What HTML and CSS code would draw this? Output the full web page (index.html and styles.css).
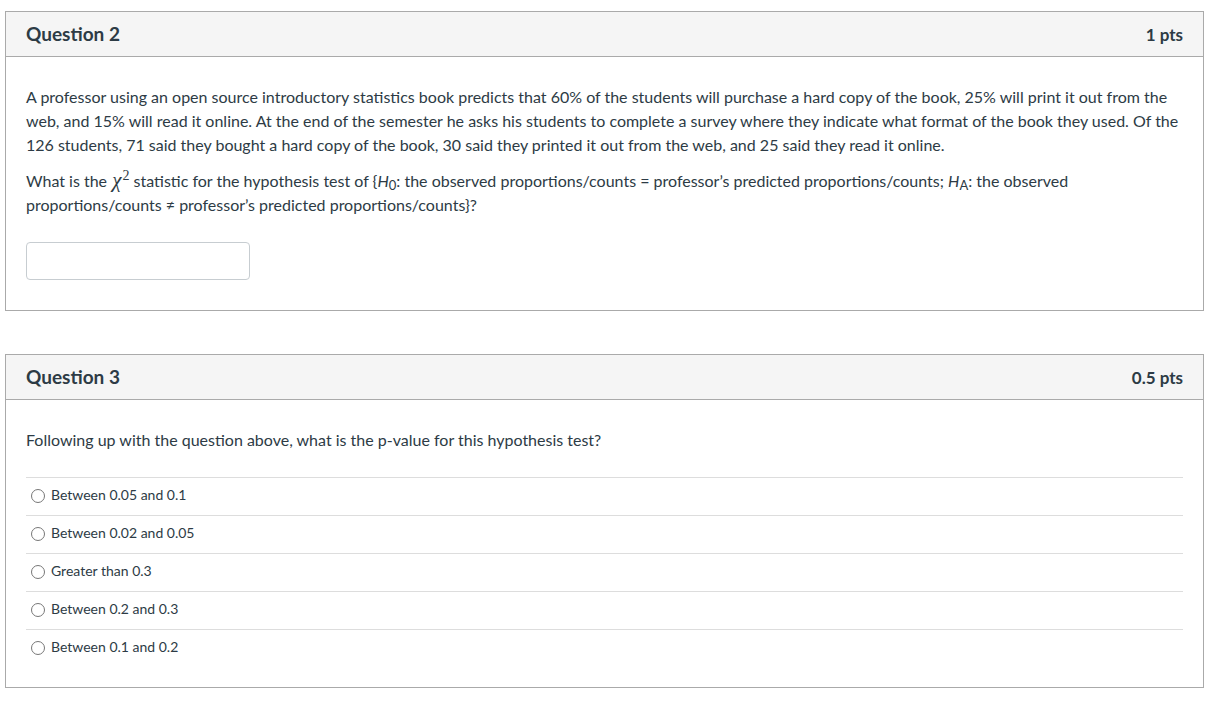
FILE: index.html
```html
<!DOCTYPE html>
<html lang="en">
<head>
<meta charset="utf-8">
<title>Quiz</title>
<link rel="stylesheet" href="styles.css">
</head>
<body>
<main class="quiz">
  <section class="question">
    <header class="q-header">
      <h2 class="q-title">Question 2</h2>
      <span class="q-pts">1 pts</span>
    </header>
    <div class="q-body">
      <p class="q-text">A professor using an open source introductory statistics book predicts that 60% of the students will purchase a hard copy of the book, 25% will print it out from the web, and 15% will read it online. At the end of the semester he asks his students to complete a survey where they indicate what format of the book they used. Of the 126 students, 71 said they bought a hard copy of the book, 30 said they printed it out from the web, and 25 said they read it online.</p>
      <p class="q-text second">What is the <span class="chi">χ</span><sup class="sq">2</sup> statistic for the hypothesis test of {<i>H</i><sub>0</sub>: the observed proportions/counts = professor’s predicted proportions/counts; <i>H</i><sub>A</sub>: the observed proportions/counts ≠ professor’s predicted proportions/counts}?</p>
      <input class="answer-input" type="text" aria-label="answer">
    </div>
  </section>

  <section class="question">
    <header class="q-header">
      <h2 class="q-title">Question 3</h2>
      <span class="q-pts">0.5 pts</span>
    </header>
    <div class="q-body body-mc">
      <p class="q-text">Following up with the question above, what is the p-value for this hypothesis test?</p>
      <ul class="answers">
        <li class="answer"><span class="radio"></span>Between 0.05 and 0.1</li>
        <li class="answer"><span class="radio"></span>Between 0.02 and 0.05</li>
        <li class="answer"><span class="radio"></span>Greater than 0.3</li>
        <li class="answer"><span class="radio"></span>Between 0.2 and 0.3</li>
        <li class="answer"><span class="radio"></span>Between 0.1 and 0.2</li>
      </ul>
    </div>
  </section>
</main>
</body>
</html>
```

FILE: styles.css
```css
* { box-sizing: border-box; }
html, body { margin: 0; padding: 0; background: #fff; }
body {
  font-family: Lato, "Liberation Sans", sans-serif;
  color: #2d3b45;
}
.quiz {
  padding: 11px 11px 0 5px;
  display: flex;
  flex-direction: column;
  gap: 43px;
}
.question {
  border: 1px solid #aaaaaa;
  background: #fff;
}
.q-header {
  background: #f5f5f5;
  border-bottom: 1px solid #aaaaaa;
  height: 45px;
  padding: 0 20px 0 20px;
  display: flex;
  align-items: center;
  justify-content: space-between;
}
.q-title {
  margin: 0;
  font-size: 19px;
  font-weight: 700;
  line-height: 1;
  margin-top: -2px;
  color: #2d3b45;
}
.q-pts {
  font-size: 17px;
  font-weight: 700;
  line-height: 1;
  color: #2d3b45;
}
.q-body {
  padding: 28px 20px 30px 20px;
}
.q-text {
  margin: 0;
  font-size: 16px;
  line-height: 24px;
}
.q-text.second { margin-top: 12px; }
.chi {
  font-family: "Liberation Serif", serif;
  font-style: italic;
  font-size: 21px;
  line-height: 1;
  margin-left: 1px;
}
.sq {
  font-family: "Liberation Serif", serif;
  font-size: 14px;
  line-height: 0;
  vertical-align: 0;
  position: relative;
  top: -7px;
  margin-left: 1px;
}
.q-text i { font-style: italic; }
.q-text sub {
  font-size: 13px;
  line-height: 0;
  vertical-align: 0;
  position: relative;
  top: 3px;
}
.answer-input {
  display: block;
  margin-top: 25px;
  width: 224px;
  height: 38px;
  border: 1px solid #c7cdd1;
  border-radius: 4px;
  background: #fff;
  font-family: inherit;
}
.body-mc { padding-bottom: 20px; }
.answers {
  list-style: none;
  margin: 25px 0 0 0;
  padding: 0;
}
.answer {
  border-top: 1px solid #dddddd;
  height: 38px;
  display: flex;
  align-items: center;
  font-size: 14px;
  padding-left: 5px;
  padding-bottom: 4px;
}
.radio {
  width: 14px;
  height: 14px;
  border: 1px solid #777;
  border-radius: 50%;
  margin-right: 6px;
  margin-top: 2px;
  flex: none;
}
```
